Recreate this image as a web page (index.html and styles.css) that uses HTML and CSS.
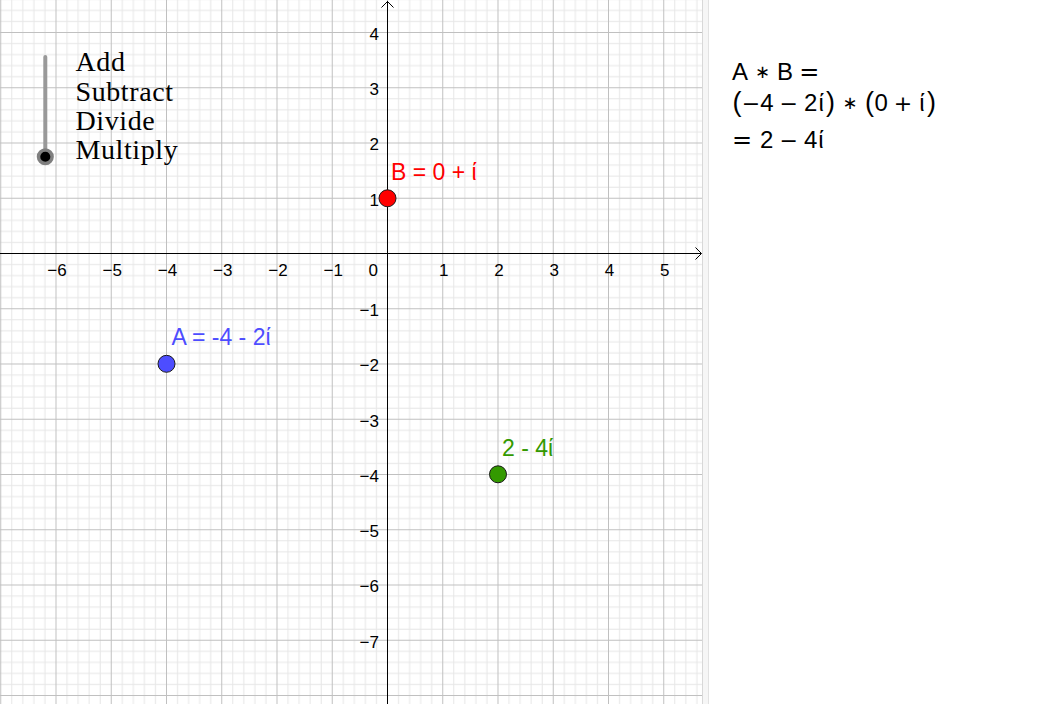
FILE: index.html
```html
<!DOCTYPE html>
<html>
<head>
<meta charset="utf-8">
<link rel="stylesheet" href="styles.css">
</head>
<body>
<div class="app">
  <div class="graphics">
    <svg class="canvas" width="702" height="704" viewBox="0 0 702 704">
      <defs>
        <pattern id="grid" x="387" y="253" width="55.25" height="55.25" patternUnits="userSpaceOnUse">
          <rect x="11.05" y="0" width="1" height="55.25" fill="#e6e6e6"/>
          <rect x="22.1" y="0" width="1" height="55.25" fill="#e6e6e6"/>
          <rect x="33.15" y="0" width="1" height="55.25" fill="#e6e6e6"/>
          <rect x="44.2" y="0" width="1" height="55.25" fill="#e6e6e6"/>
          <rect x="0" y="11.05" width="55.25" height="1" fill="#e6e6e6"/>
          <rect x="0" y="22.1" width="55.25" height="1" fill="#e6e6e6"/>
          <rect x="0" y="33.15" width="55.25" height="1" fill="#e6e6e6"/>
          <rect x="0" y="44.2" width="55.25" height="1" fill="#e6e6e6"/>
          <rect x="0" y="0" width="1" height="55.25" fill="#c0c0c0"/>
          <rect x="0" y="0" width="55.25" height="1" fill="#c0c0c0"/>
        </pattern>
      </defs>
      <rect x="0" y="0" width="702" height="704" fill="#ffffff"/>
      <rect x="0" y="0" width="702" height="704" fill="url(#grid)"/>

      <!-- axes -->
      <line x1="0" y1="253.5" x2="701" y2="253.5" class="axis"/>
      <polyline points="695.5,247.5 701.5,253.5 695.5,259.5" class="arrow"/>
      <line x1="387.5" y1="1" x2="387.5" y2="704" class="axis"/>
      <polyline points="381.5,7.5 387.5,1.5 393.5,7.5" class="arrow"/>

      <!-- x labels -->
      <g class="tick tick-x">
        <text x="57">−6</text>
        <text x="112.25">−5</text>
        <text x="167.5">−4</text>
        <text x="222.75">−3</text>
        <text x="278">−2</text>
        <text x="333.25">−1</text>
        <text x="443.75">1</text>
        <text x="499">2</text>
        <text x="554.25">3</text>
        <text x="609.5">4</text>
        <text x="664.75">5</text>
      </g>
      <text class="tick tick-zero" x="378" y="276">0</text>
      <!-- y labels -->
      <g class="tick tick-y">
        <text y="39.8">4</text>
        <text y="95">3</text>
        <text y="150.3">2</text>
        <text y="205.5">1</text>
        <text y="316">−1</text>
        <text y="371.3">−2</text>
        <text y="426.5">−3</text>
        <text y="481.8">−4</text>
        <text y="537">−5</text>
        <text y="592.3">−6</text>
        <text y="647.5">−7</text>
      </g>

      <!-- slider -->
      <line x1="45.3" y1="57" x2="45.3" y2="156.7" class="slider-track"/>
      <circle cx="45.3" cy="156.7" r="6.8" class="slider-knob"/>
      <g class="slider-labels">
        <text x="75.5" y="71">Add</text>
        <text x="75.5" y="100.5">Subtract</text>
        <text x="75.5" y="130">Divide</text>
        <text x="75.5" y="158.5">Multiply</text>
      </g>

      <!-- points -->
      <circle cx="387.5" cy="198.3" r="8.5" class="pt pt-b"/>
      <circle cx="166.5" cy="363.8" r="8.5" class="pt pt-a"/>
      <circle cx="498" cy="474.3" r="8.5" class="pt pt-c"/>
      <text x="391" y="179.5" class="lbl lbl-b">B = 0 + ί</text>
      <text x="171.5" y="345" class="lbl lbl-a">A = -4 - 2ί</text>
      <text x="502" y="456" class="lbl lbl-c">2 - 4ί</text>
    </svg>
  </div>
  <div class="splitter"></div>
  <div class="algebra">
    <div class="line">A<span class="bin ast">∗</span>B<span class="rel">=</span></div>
    <div class="line"><span class="paren">(</span><span class="un">−</span>4<span class="bin">−</span>2<span class="iota">ί</span><span class="paren">)</span><span class="bin ast">∗</span><span class="paren">(</span>0<span class="bin">+</span><span class="iota">ί</span><span class="paren">)</span></div>
    <div class="line line-last"><span class="rel rel-first">=</span>2<span class="bin">−</span>4<span class="iota">ί</span></div>
  </div>
</div>
</body>
</html>
```
FILE: styles.css
```css
html, body {
  margin: 0;
  padding: 0;
  background: #ffffff;
  overflow: hidden;
}

.app {
  display: flex;
  width: 1049px;
  height: 704px;
}

.graphics {
  width: 702px;
  height: 704px;
  flex: none;
}

.canvas {
  display: block;
}

.axis {
  stroke: #000000;
  stroke-width: 1;
}

.arrow {
  fill: none;
  stroke: #000000;
  stroke-width: 1;
}

.tick {
  font-family: "Liberation Sans", Arial, sans-serif;
  font-size: 17px;
  fill: #000000;
}

.tick-x text {
  text-anchor: middle;
}

.tick-x {
  transform: translateY(276px);
}

.tick-zero {
  text-anchor: end;
}

.tick-y text {
  text-anchor: end;
  transform: translateX(379px);
}

.slider-track {
  stroke: #999999;
  stroke-width: 4;
  stroke-linecap: round;
}

.slider-knob {
  fill: #000000;
  stroke: #7f7f7f;
  stroke-width: 3.5;
}

.slider-labels text {
  font-family: "Liberation Serif", "Times New Roman", serif;
  font-size: 28px;
  letter-spacing: 0.6px;
  fill: #000000;
}

.pt {
  stroke: #1a1a1a;
  stroke-width: 1;
}

.pt-b { fill: #ff0000; }
.pt-a { fill: #4d4dff; }
.pt-c { fill: #339900; }

.lbl {
  font-family: "Liberation Sans", Arial, sans-serif;
  font-size: 23px;
}

.lbl-b { fill: #ff0000; }
.lbl-a { fill: #4d4dff; }
.lbl-c { fill: #339900; }

.splitter {
  width: 5px;
  flex: none;
  background: #f6f6f6;
  border-left: 1px solid #d8d8d8;
  border-right: 1px solid #e2e2e2;
}

.algebra {
  flex: 1;
  padding: 56px 0 0 23px;
  font-family: "Liberation Sans", Arial, sans-serif;
  font-size: 24px;
  color: #000000;
}

.line {
  height: 31px;
  line-height: 31px;
  white-space: nowrap;
}

.line-last {
  margin-top: 6px;
}

.paren {
  font-size: 27px;
  margin: 0 0.4px;
}

.bin {
  font-family: "DejaVu Sans", sans-serif;
  font-size: 22px;
  margin: 0 6px;
}

.ast {
  font-size: 18px;
  margin: 0 7px;
  vertical-align: 2px;
}

.un {
  font-family: "DejaVu Sans", sans-serif;
  font-size: 22px;
}

.rel {
  font-family: "DejaVu Sans", sans-serif;
  font-size: 24px;
  margin-left: 6px;
}

.rel-first {
  margin-left: 0;
  margin-right: 8px;
}

.iota {
  margin: 0 2px 0 1px;
}
```
